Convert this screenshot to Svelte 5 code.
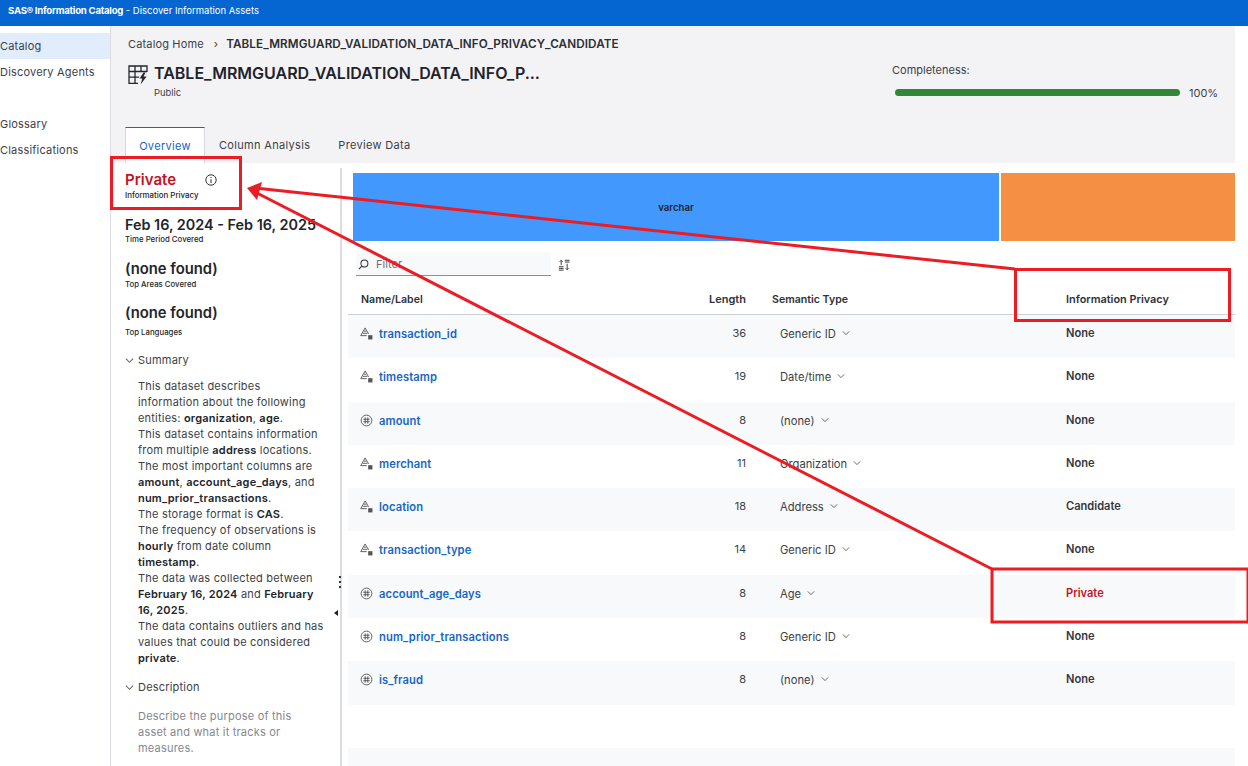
<script>
  const rows = [
    { name: 'transaction_id', type: 'text', len: 36, sem: 'Generic ID', priv: 'None' },
    { name: 'timestamp', type: 'text', len: 19, sem: 'Date/time', priv: 'None' },
    { name: 'amount', type: 'num', len: 8, sem: '(none)', priv: 'None' },
    { name: 'merchant', type: 'text', len: 11, sem: 'Organization', priv: 'None' },
    { name: 'location', type: 'text', len: 18, sem: 'Address', priv: 'Candidate' },
    { name: 'transaction_type', type: 'text', len: 14, sem: 'Generic ID', priv: 'None' },
    { name: 'account_age_days', type: 'num', len: 8, sem: 'Age', priv: 'Private' },
    { name: 'num_prior_transactions', type: 'num', len: 8, sem: 'Generic ID', priv: 'None' },
    { name: 'is_fraud', type: 'num', len: 8, sem: '(none)', priv: 'None' }
  ];
</script>

<div class="page">
  <header class="topbar"><b>SAS® Information Catalog</b><span>&nbsp;- Discover Information Assets</span></header>
  <div class="shell">
    <nav class="side">
      <a class="sel">Catalog</a>
      <a>Discovery Agents</a>
      <a class="gap">Glossary</a>
      <a>Classifications</a>
    </nav>
    <main class="main">
      <section class="head">
        <div class="crumbs"><span>Catalog Home</span><i class="sep">›</i><strong>TABLE_MRMGUARD_VALIDATION_DATA_INFO_PRIVACY_CANDIDATE</strong></div>
        <div class="titlerow">
          <svg class="tableicon" viewBox="0 0 20 20" width="20" height="20" fill="none" stroke="#24272c" stroke-width="1.3">
            <path d="M10 18.4H1V1h18v6M1 6.5h18M1 12.2h10M1 18.4h9M7 1v17.4M13 1v5.5"/>
            <path d="M15.5 7.5l-4 6h2.8L12.6 19.5l6-8h-3.1l2-4z" fill="#24272c" stroke="none"/>
          </svg>
          <div class="titles">
            <h1>TABLE_MRMGUARD_VALIDATION_DATA_INFO_P...</h1>
            <div class="public">Public</div>
          </div>
          <div class="complete">
            <div class="clabel">Completeness:</div>
            <div class="cbar"><div class="track"></div><span>100%</span></div>
          </div>
        </div>
        <div class="tabs">
          <div class="tab active">Overview</div>
          <div class="tab">Column Analysis</div>
          <div class="tab">Preview Data</div>
        </div>
      </section>
      <section class="body">
        <aside class="panel">
          <div class="stat first">
            <div class="val red">Private <svg class="info" viewBox="0 0 12 12" width="12" height="12" fill="none" stroke="#333" stroke-width="1"><circle cx="6" cy="6" r="5.2"/><path d="M6 5.2V9M6 3v1.1"/></svg></div>
            <div class="cap topcap">Information Privacy</div>
          </div>
          <div class="stat"><div class="val">Feb 16, 2024 - Feb 16, 2025</div><div class="cap">Time Period Covered</div></div>
          <div class="stat"><div class="val none">(none found)</div><div class="cap areas">Top Areas Covered</div></div>
          <div class="stat"><div class="val none">(none found)</div><div class="cap lang">Top Languages</div></div>
          <div class="sechead"><svg viewBox="0 0 10 10" width="9" height="9" fill="none" stroke="#666" stroke-width="1.2"><path d="M1 3l4 4 4-4"/></svg>Summary</div>
          <div class="summary">
            This dataset describes<br>information about the following entities: <b>organization</b>, <b>age</b>.<br>
            This dataset contains information from multiple <b>address</b> locations.<br>
            The most important columns are <b>amount</b>, <b>account_age_days</b>, and <b>num_prior_transactions</b>.<br>
            The storage format is <b>CAS</b>.<br>
            The frequency of observations is <b>hourly</b> from date column <b>timestamp</b>.<br>
            The data was collected between <b>February 16, 2024</b> and <b>February 16, 2025</b>.<br>
            The data contains outliers and has values that could be considered <b>private</b>.
          </div>
          <div class="sechead desc"><svg viewBox="0 0 10 10" width="9" height="9" fill="none" stroke="#666" stroke-width="1.2"><path d="M1 3l4 4 4-4"/></svg>Description</div>
          <div class="summary muted">Describe the purpose of this asset and what it tracks or measures.</div>
        </aside>
        <div class="splitter">
          <span class="dots"></span>
          <span class="tri"></span>
        </div>
        <div class="content">
          <div class="treemap">
            <div class="blue">varchar</div>
            <div class="orange"></div>
          </div>
          <div class="filterrow">
            <div class="filter">
              <svg viewBox="0 0 12 12" width="11" height="11" fill="none" stroke="#333" stroke-width="1.1"><circle cx="7" cy="5" r="3.8"/><path d="M4.2 7.8L1 11"/></svg>
              <span>Filter</span>
            </div>
            <svg class="sort" viewBox="0 0 14 14" width="12" height="12" fill="none" stroke="#333" stroke-width="1.1"><path d="M1 9h5.5M1 11h5.5M1 13h5.5M3.7 7V1.5M2 3.2l1.7-1.7 1.7 1.7M8 1.5h5.5M8 3.5h5.5M10.7 5.5v7M9 10.8l1.7 1.7 1.7-1.7"/></svg>
          </div>
          <div class="thead row">
            <div class="c-name">Name/Label</div>
            <div class="c-len">Length</div>
            <div class="c-sem">Semantic Type</div>
            <div class="c-priv">Information Privacy</div>
          </div>
          <div class="tbody">
            {#each rows as r, i}
              <div class="row data" class:alt={i % 2 === 0}>
                <div class="c-name">
                  {#if r.type === 'text'}
                    <svg viewBox="0 0 14 14" width="13" height="13" fill="none" stroke="#444" stroke-width="0.9"><path d="M5.5 1L0.8 9.3h6.5M5.5 1L9.3 7.5M4.2 4.5h2.6M3 6.8h5"/><rect x="8.8" y="8.8" width="4.6" height="4.6" fill="#555" stroke="none"/></svg>
                  {:else}
                    <svg viewBox="0 0 14 14" width="13" height="13" fill="none" stroke="#444" stroke-width="0.9"><circle cx="7" cy="7" r="5.8"/><path d="M5.6 3.6v6.8M8.4 3.6v6.8M3.6 5.7h6.8M3.6 8.3h6.8"/></svg>
                  {/if}
                  <a>{r.name}</a>
                </div>
                <div class="c-len">{r.len}</div>
                <div class="c-sem sem">{r.sem}<svg viewBox="0 0 10 10" width="8" height="8" fill="none" stroke="#444" stroke-width="1"><path d="M1 3l4 4 4-4"/></svg></div>
                <div class="c-priv val2" class:private={r.priv === 'Private'}>{r.priv}</div>
              </div>
            {/each}
            <div class="row data blank"></div>
            <div class="row data alt blank"></div>
          </div>
        </div>
      </section>
    </main>
    <div class="edge"></div>
  </div>

  <svg class="marks" viewBox="0 0 1248 766" width="1248" height="766" fill="none" stroke="#ec1c24" stroke-width="3">
    <rect x="111.5" y="157.5" width="129" height="51"/>
    <rect x="1015.5" y="269.5" width="214" height="51"/>
    <rect x="992" y="569" width="256" height="53"/>
    <path d="M1015 269L255 188M992 569L255 192"/>
    <path d="M247 188L262 182L257 200z" fill="#ec1c24" stroke="none"/>
  </svg>
</div>

<style>
  :global(body) { margin: 0; background: #fff; }
  .page { position: relative; width: 1248px; height: 766px; overflow: hidden; font-family: Inter, "Noto Sans", sans-serif; color: #3b3f46; font-size: 11px; }
  .topbar { height: 26px; background: #0566d2; color: #fff; display: flex; align-items: center; padding-left: 8px; padding-bottom: 5px; box-sizing: border-box; font-size: 9.6px; }
  .topbar b { font-weight: 700; letter-spacing: -0.25px; }
  .topbar span { font-size: 9.5px; }
  .shell { display: flex; height: 740px; }
  .side { width: 110px; border-right: 1px solid #dcdde3; padding-top: 7px; flex: none; }
  .side a { display: flex; align-items: center; height: 26px; font-size: 11px; color: #3b3f46; letter-spacing: 0.2px; }
  .side a.sel { background: #e1edfc; }
  .side a.gap { margin-top: 26px; }
  .main { width: 1124px; flex: none; display: flex; flex-direction: column; }
  .edge { flex: 1; }
  .head { height: 137px; background: #f3f3f6; padding: 11px 0 0 14px; box-sizing: border-box; display: flex; flex-direction: column; }
  .crumbs { display: flex; align-items: center; height: 14px; margin-left: 3px; font-size: 11px; letter-spacing: 0.15px; }
  .crumbs .sep { font-style: normal; margin: 0 8px 0 10px; }
  .crumbs strong { font-weight: 600; color: #2b2e33; font-size: 11.7px; letter-spacing: 0.1px; }
  .titlerow { display: flex; margin-top: 12px; height: 51px; }
  .tableicon { margin: 2px 6px 0 3px; flex: none; }
  .titles { width: 738px; flex: none; }
  h1 { margin: 0; font-size: 16px; line-height: 20px; font-weight: 600; color: #1f2329; white-space: nowrap; }
  .public { font-size: 9.4px; margin-top: 4px; line-height: 11px; }
  .complete { width: 340px; }
  .clabel { font-size: 11px; line-height: 14px; }
  .cbar { display: flex; align-items: center; margin-top: 8px; margin-left: 3px; }
  .track { width: 285px; height: 7px; border-radius: 4px; background: #328637; }
  .cbar span { margin-left: 9px; font-size: 11px; padding-top: 1px; }
  .tabs { display: flex; margin-top: 13px; height: 36px; }
  .tab { display: flex; align-items: center; padding: 0 14px; font-size: 11px; letter-spacing: 0.32px; box-sizing: border-box; }
  .tab.active { width: 80px; justify-content: center; padding: 0; background: #fff; color: #1666c4; border: 1px solid #d6d7dc; border-top: 1px solid #1666c4; border-bottom: 0; }
  .body { display: flex; flex: 1; min-height: 0; }
  .panel { width: 229px; flex: none; padding: 8px 0 0 14px; box-sizing: border-box; overflow: hidden; }
  .stat { height: 44px; }
  .stat.first { height: 45px; }
  .val { font-size: 14.4px; font-weight: 600; line-height: 18px; color: #22252a; white-space: nowrap; display: flex; align-items: center; }
  .val.red { color: #c4131f; font-size: 15px; }
  .val.none { font-size: 14.8px; }
  .info { margin-left: 29px; }
  .cap { font-size: 7.8px; font-weight: 500; line-height: 10px; color: #22252a; }
  .cap.topcap { margin-top: 1px; font-size: 7.9px; }
  .cap.areas { margin-top: 1px; }
  .cap.lang { margin-top: 5px; }
  .sechead { display: flex; align-items: center; gap: 4px; font-size: 11px; letter-spacing: 0.2px; height: 14px; margin-top: 5px; }
  .sechead.desc { margin-top: 14px; }
  .summary { margin: 11px 0 0 13px; font-size: 11px; line-height: 16px; width: 190px; letter-spacing: 0.2px; }
  .summary b { font-weight: 600; color: #22252a; }
  .summary.muted { color: #84878f; width: 172px; margin-top: 14px; }
  .splitter { position: relative; width: 2px; flex: none; background: #dcdde3; margin-top: 5px; }
  .dots { position: absolute; left: -1px; top: 408px; width: 2px; height: 12px; background: repeating-linear-gradient(#333 0 2px, transparent 2px 5px); }
  .tri { position: absolute; left: -6px; top: 442px; border: 3px solid transparent; border-right: 4px solid #222; border-left: 0; }
  .content { flex: 1; min-width: 0; padding: 10px 0 0 6px; display: flex; flex-direction: column; }
  .treemap { display: flex; flex: none; gap: 2px; height: 68px; margin-left: 5px; }
  .blue { width: 646px; background: #4298fd; display: flex; align-items: center; justify-content: center; font-size: 9.6px; font-weight: 600; color: #1f2329; }
  .orange { flex: 1; background: #f48f43; }
  .filterrow { display: flex; flex: none; align-items: center; margin: 12px 0 0 8px; gap: 7px; }
  .filter { width: 195px; height: 23px; background: #f8f9fb; border-bottom: 1px solid #8d9097; display: flex; align-items: center; gap: 7px; padding-left: 2px; box-sizing: border-box; font-size: 11px; color: #6d7077; }
  .thead { height: 32px; flex: none; margin-top: 7px; padding-top: 1px; border-bottom: 1px solid #d0d1d6; box-sizing: border-box; font-weight: 600; font-size: 10.6px; color: #2f3238; align-items: center; }
  .row { display: grid; grid-template-columns: 250px 148px 320px 169px; width: 887px; }
  .thead .c-name { padding-left: 13px; }
  .thead .c-sem { padding-left: 26px; }
  .thead .c-priv { font-size: 10.9px; }
  .data { height: 43.3px; padding-top: 11px; box-sizing: border-box; }
  .alt { background: #f8f9fb; }
  .c-name { display: flex; align-items: flex-start; gap: 6px; padding-left: 12px; }
  .data .c-name { padding-top: 1px; }
  .c-name a { color: #1666c4; font-weight: 600; font-size: 11.2px; line-height: 14px; letter-spacing: 0.1px; }
  .c-len { text-align: right; font-size: 11px; line-height: 14px; }
  .c-sem { padding-left: 34px; }
  .sem { display: flex; gap: 6px; align-items: flex-start; font-size: 11.2px; line-height: 14px; padding-top: 1px; }
  .sem svg { margin-top: 2px; }
  .val2 { font-weight: 600; font-size: 11.1px; line-height: 14px; color: #33363b; }
  .val2.private { color: #c4131f; }
  .marks { position: absolute; left: 0; top: 0; pointer-events: none; }
</style>
